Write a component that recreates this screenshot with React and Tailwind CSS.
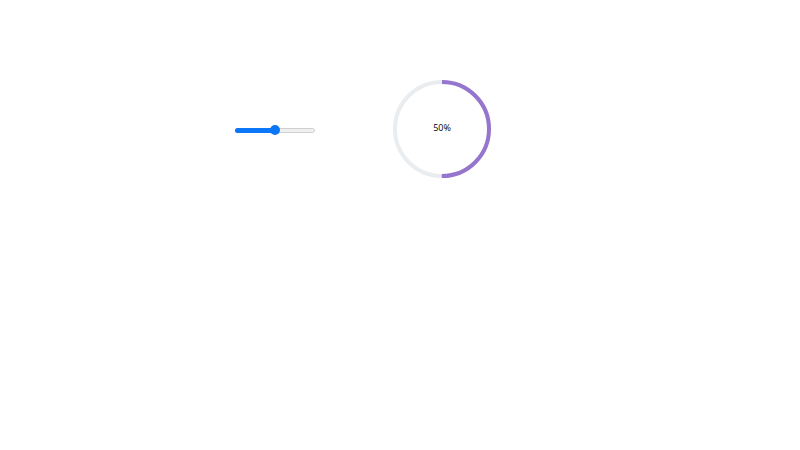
import React, { useState } from "react";

const Slider = ({ value }) => (
  <div className="relative w-[80px] h-[10px] mt-[2px] flex items-center">
    <div className="w-full h-[5px] rounded-full bg-[#efefef] border border-[#cfcfcf]" />
    <div
      className="absolute left-0 h-[5px] rounded-full bg-[#0b76f7]"
      style={{ width: `${value}%` }}
    />
    <div
      className="absolute w-[10px] h-[10px] rounded-full bg-[#0b76f7] -translate-x-1/2"
      style={{ left: `${value}%` }}
    />
  </div>
);

const Ring = ({ percent }) => {
  const r = 47;
  const c = 2 * Math.PI * r;
  return (
    <div className="relative w-[100px] h-[100px] flex items-center justify-center">
      <svg width="100" height="100" viewBox="0 0 100 100" className="absolute inset-0 -rotate-90">
        <circle cx="50" cy="50" r={r} fill="none" stroke="#eaedf0" strokeWidth="4" />
        <circle
          cx="50"
          cy="50"
          r={r}
          fill="none"
          stroke="#9575cd"
          strokeWidth="4"
          strokeDasharray={c}
          strokeDashoffset={c * (1 - percent / 100)}
        />
      </svg>
      <span className="relative -mt-[3px] text-[9px] text-black font-['Open_Sans',sans-serif]">{percent}%</span>
    </div>
  );
};

export default function App() {
  const [value] = useState(50);
  return (
    <div className="w-[800px] h-[450px] bg-white">
      <div className="flex items-center pt-[79px] pl-[235px] gap-[77px]">
        <Slider value={value} />
        <Ring percent={value} />
      </div>
    </div>
  );
}
